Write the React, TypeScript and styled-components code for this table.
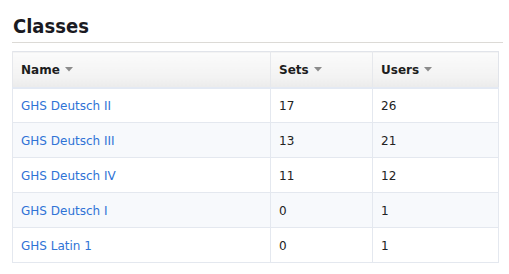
import React from 'react';
import styled, { createGlobalStyle } from 'styled-components';

const GlobalStyle = createGlobalStyle`
	html, body {
		margin: 0;
		padding: 0;
		background: #ffffff;
		font-family: 'DejaVu Sans', Verdana, sans-serif;
	}
`;

interface ClassRow {
	name: string;
	sets: number;
	users: number;
}

const rows: ClassRow[] = [
	{ name: 'GHS Deutsch II', sets: 17, users: 26 },
	{ name: 'GHS Deutsch III', sets: 13, users: 21 },
	{ name: 'GHS Deutsch IV', sets: 11, users: 12 },
	{ name: 'GHS Deutsch I', sets: 0, users: 1 },
	{ name: 'GHS Latin 1', sets: 0, users: 1 },
];

function SortArrow() {
	return (
		<Arrow width="8" height="5" viewBox="0 0 8 5">
			<path d="M0 0 H8 L4 4.5 Z" fill="#8c8c8c" />
		</Arrow>
	);
}

function App() {
	return (
		<Page>
			<GlobalStyle />
			<Title>Classes</Title>
			<Table>
				<colgroup>
					<col style={{ width: 258 }} />
					<col style={{ width: 102 }} />
					<col style={{ width: 126 }} />
				</colgroup>
				<thead>
					<tr>
						<HeadCell>
							Name
							<SortArrow />
						</HeadCell>
						<HeadCell>
							Sets
							<SortArrow />
						</HeadCell>
						<HeadCell>
							Users
							<SortArrow />
						</HeadCell>
					</tr>
				</thead>
				<tbody>
					{rows.map((row, i) => (
						<BodyRow key={row.name} $striped={i % 2 === 1}>
							<Cell>
								<ClassLink href="#">{row.name}</ClassLink>
							</Cell>
							<Cell>{row.sets}</Cell>
							<Cell>{row.users}</Cell>
						</BodyRow>
					))}
				</tbody>
			</Table>
		</Page>
	);
}

const Page = styled.div`
	width: 491px;
	padding: 12px 0 0 12px;
`;
const Title = styled.h1`
	margin: 0 0 8px 0;
	padding: 4px 0 6px 1px;
	font-family: 'DejaVu Sans Condensed', 'DejaVu Sans', sans-serif;
	font-size: 20px;
	line-height: 20px;
	font-weight: bold;
	color: #1a1a22;
	border-bottom: 1px solid #dcdad6;
`;
const Table = styled.table`
	width: 486px;
	border-collapse: collapse;
	table-layout: fixed;
	border: 1px solid #e1e4ea;
	font-size: 12px;
`;
const HeadCell = styled.th`
	height: 36px;
	padding: 1px 8px 0;
	text-align: left;
	font-weight: bold;
	color: #1d1d1d;
	background: linear-gradient(#fbfbfb, #f3f3f3 70%, #ebebeb);
	border-left: 1px solid #e6e8ec;
	border-bottom: 2px solid #e3e9f3;
	box-sizing: border-box;
`;
const Arrow = styled.svg`
	margin-left: 5px;
	vertical-align: 2px;
`;
const BodyRow = styled.tr<{ $striped: boolean }>`
	background: ${({ $striped }) => ($striped ? '#f7f9fc' : '#ffffff')};
`;
const Cell = styled.td`
	height: 35px;
	padding: 2px 8px 0;
	color: #222;
	border: 1px solid #e4e8ef;
	box-sizing: border-box;
`;
const ClassLink = styled.a`
	color: #2f73d6;
	text-decoration: none;
`;

export default App;
